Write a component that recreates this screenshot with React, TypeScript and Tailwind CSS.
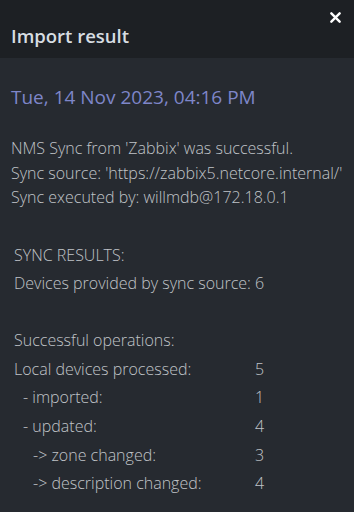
import React from "react";

const rows: [string, string, string][] = [
  ["Local devices processed:", "5", "pl-0"],
  ["- imported:", "1", "pl-[9px]"],
  ["- updated:", "4", "pl-[9px]"],
  ["-> zone changed:", "3", "pl-[19px]"],
  ["-> description changed:", "4", "pl-[19px]"],
];

export default function App() {
  return (
    <div className="w-[354px] h-[512px] overflow-hidden bg-[#262a30] font-['Open_Sans',sans-serif]">
      <div className="relative h-[58px] bg-[#1d2024] flex items-end pb-[9px] pl-[11px]">
        <h1 className="text-[18.5px] font-semibold text-[#d7dde2] leading-[26px]">Import result</h1>
        <button className="absolute right-[13px] top-[12px] text-white">
          <svg width="11" height="11" viewBox="0 0 12 12">
            <path d="M1.5 1.5 L10.5 10.5 M10.5 1.5 L1.5 10.5" stroke="currentColor" strokeWidth="2.6" strokeLinecap="round" />
          </svg>
        </button>
      </div>
      <div className="px-[11px] pt-[26px]">
        <div className="text-[19px] text-[#7e86c9] leading-[26px]">Tue, 14 Nov 2023, 04:16 PM</div>
        <div className="mt-[26px] text-[16px] font-light text-[#c0c4c8] leading-[24.5px]">
          <div>NMS Sync from 'Zabbix' was successful.</div>
          <div>Sync source: 'https://zabbix5.netcore.internal/'</div>
          <div>Sync executed by: willmdb@172.18.0.1</div>
        </div>
        <div className="mt-[31px] pl-[3px] text-[16px] font-light text-[#c0c4c8] leading-[28.6px]">
          <div>SYNC RESULTS:</div>
          <div>Devices provided by sync source: 6</div>
          <div className="h-[28.6px]" />
          <div>Successful operations:</div>
          {rows.map(([label, val, pad]) => (
            <div key={label} className="flex">
              <div className={`w-[241px] ${pad}`}>{label}</div>
              <div>{val}</div>
            </div>
          ))}
        </div>
      </div>
    </div>
  );
}
